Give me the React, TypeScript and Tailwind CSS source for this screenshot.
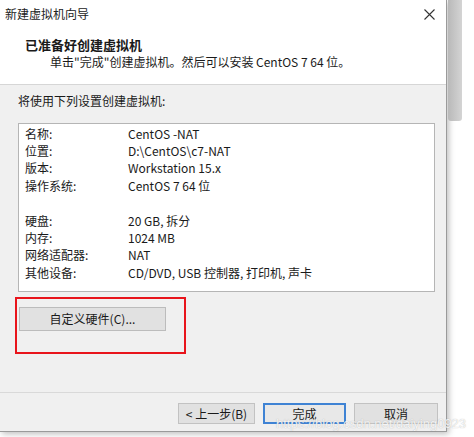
const rows: [string, string][] = [
  ["名称:", "CentOS -NAT"],
  ["位置:", "D:\\CentOS\\c7-NAT"],
  ["版本:", "Workstation 15.x"],
  ["操作系统:", "CentOS 7 64 位"],
  ["", ""],
  ["硬盘:", "20 GB, 拆分"],
  ["内存:", "1024 MB"],
  ["网络适配器:", "NAT"],
  ["其他设备:", "CD/DVD, USB 控制器, 打印机, 声卡"],
];

export default function App() {
  return (
    <div
      className="relative flex w-[474px] h-[437px] bg-white overflow-hidden text-[12px] text-[#1a1a1a]"
      style={{ fontFamily: '"Noto Sans CJK SC", "Noto Sans", sans-serif' }}
    >
      {/* dialog */}
      <div className="flex flex-col w-[447px] h-[432px] bg-[#f0f0f0] border-r border-b border-[#9a9a9a] shadow-[2px_2px_6px_rgba(0,0,0,0.25)]">
        {/* title bar */}
        <div className="flex items-center justify-between h-[28px] pl-[5px] pr-[11px] bg-white">
          <span className="leading-none text-[#222]">新建虚拟机向导</span>
          <svg width="11" height="11" viewBox="0 0 11 11">
            <path d="M0.5 0.5 L10.5 10.5 M10.5 0.5 L0.5 10.5" stroke="#333" strokeWidth="1.1" />
          </svg>
        </div>

        {/* header */}
        <div className="bg-white pt-[8px] pb-[14px] pl-[25px] border-b border-[#d6d6d6]">
          <div className="font-bold text-[13px] leading-[17px]">已准备好创建虚拟机</div>
          <div className="pl-[25px] leading-[17px]">单击"完成"创建虚拟机。然后可以安装 CentOS 7 64 位。</div>
        </div>

        {/* body */}
        <div className="flex flex-col flex-1">
          <div className="pl-[18px] pt-[7px] leading-[17px]">将使用下列设置创建虚拟机:</div>

          <div className="ml-[18px] mt-[14px] w-[417px] h-[169px] bg-white border border-[#b5b5b5] pl-[6px] pt-[1px]">
            {rows.map(([k, v], i) => (
              <div key={i} className="flex h-[17.4px] items-center">
                <span className="w-[103px]">{k}</span>
                <span>{v}</span>
              </div>
            ))}
          </div>

          <div className="ml-[15px] mt-[5px] w-[171px] h-[57px] border-2 border-[#e8141b] pl-[2px] pt-[8px]">
            <div className="flex items-center justify-center w-[147px] h-[24px] bg-[#e1e1e1] border border-[#bcbcbc]">
              自定义硬件(C)...
            </div>
          </div>

          <div className="mt-auto border-t border-[#d9d9d9] h-[39px] flex items-start justify-end gap-[8px] pt-[10px] pr-[8px]">
            <div className="flex items-center justify-center w-[77px] h-[21px] bg-[#e1e1e1] border border-[#c2c2c2]">
              &lt; 上一步(B)
            </div>
            <div className="flex items-center justify-center w-[83px] h-[21px] bg-[#e8e8e8] border-2 border-[#3f83d4]">
              完成
            </div>
            <div className="flex items-center justify-center w-[84px] h-[21px] bg-[#e1e1e1] border border-[#c2c2c2]">
              取消
            </div>
          </div>
        </div>
      </div>

      {/* background window scrollbar */}
      <div className="ml-[1px] w-[14px] h-[121px] rounded-b-[3px] bg-gradient-to-r from-[#b9b9b9] to-[#d4d4d4]" />

      {/* watermark */}
      <div
        className="absolute left-[276px] top-[414px] text-[13px] text-white/85 pointer-events-none"
        style={{ fontFamily: '"Liberation Sans", sans-serif', textShadow: "0 0 1px rgba(120,120,120,0.6)" }}
      >
        https://blog.csdn.net/daiying0923
      </div>
    </div>
  );
}
